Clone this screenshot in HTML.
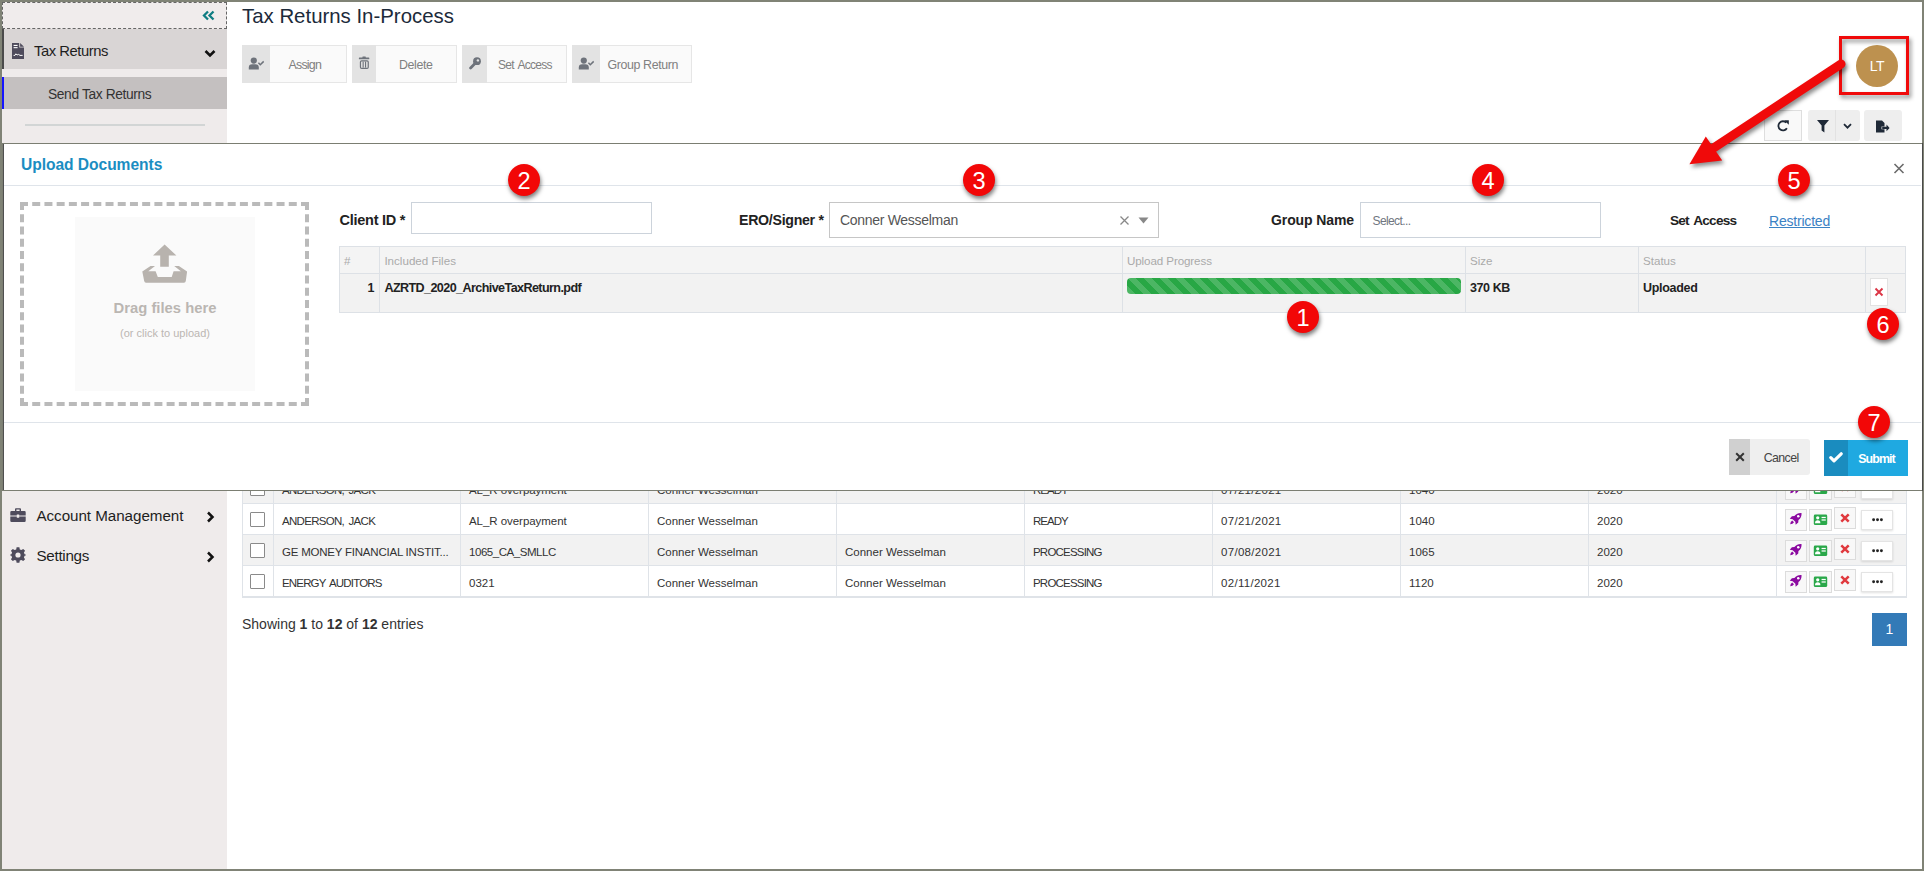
<!DOCTYPE html>
<html><head><meta charset="utf-8">
<style>
*{box-sizing:border-box;margin:0;padding:0}
html,body{width:1924px;height:871px;overflow:hidden;background:#fff;font-family:"Liberation Sans",sans-serif;color:#333}
.a{position:absolute}
.t{position:absolute;white-space:nowrap;line-height:1}
.m{z-index:12}
#frame{position:absolute;left:0;top:0;width:1924px;height:871px;border:2px solid #808376;z-index:60;pointer-events:none}
.badge{position:absolute;width:32px;height:32px;border-radius:50%;background:#f20707;box-shadow:1px 3px 4px rgba(0,0,0,.5);color:#fff;font-size:23.6px;line-height:35px;text-align:center;z-index:40}
.tb{position:absolute;top:45px;height:38px;border:1px solid #e6e6e6;background:#fafafa}
.tb .ic{position:absolute;left:-1px;top:-1px;bottom:-1px;background:#e3e3e3}
.tb .tx{position:absolute;top:12.8px;font-size:12.4px;color:#808080;line-height:1;white-space:nowrap}
svg{display:block}
</style></head><body>
<div id="frame"></div>

<!-- SIDEBAR -->
<div class="a" style="left:2px;top:2px;width:225px;height:867px;background:#efebeb"></div>
<div class="a" style="left:2px;top:2px;width:225px;height:27px;border:1px dashed #666;background:#f0ecec"></div>
<svg class="a" style="left:201px;top:9px" width="16" height="13" viewBox="0 0 16 13"><path d="M7 2.5 L3 6.5 L7 10.5 M12.5 2.5 L8.5 6.5 L12.5 10.5" fill="none" stroke="#0f7d82" stroke-width="2.3"/></svg>
<div class="a" style="left:2px;top:29px;width:225px;height:40px;background:#d9d5d5;border-left:2px solid #4b4b4b"></div>
<div class="a" style="left:2px;top:77px;width:225px;height:32px;background:#c4c0c0;border-left:2px solid #1515ff"></div>
<div class="a" style="left:25px;top:124px;width:180px;height:2px;background:#d2d5d5"></div>
<svg class="a" style="left:12px;top:42.8px" width="12" height="16" viewBox="0 0 12 16"><path d="M0 0 H7.2 V4.4 H12 V16 H0 Z" fill="#4e4b5c"/><path d="M8.1 0.1 L12 3.7 H8.1 Z" fill="#4e4b5c"/><rect x="1.6" y="1.9" width="4" height="1.1" fill="#fff"/><rect x="1.6" y="4.1" width="4" height="1.1" fill="#fff"/><path d="M1.6 12.4 H2.9 L3.9 10.8 L5.1 12 L6.6 11.4 L8 12.4 H10.6" fill="none" stroke="#fff" stroke-width="1"/></svg>
<div class="t" style="left:34px;top:44.3px;font-size:14.8px;letter-spacing:-0.45px;color:#1e1e1e">Tax Returns</div>
<svg class="a" style="left:204px;top:48.7px" width="12" height="10" viewBox="0 0 12 10"><path d="M1.5 2 L6 6.5 L10.5 2" fill="none" stroke="#111" stroke-width="2.6"/></svg>
<div class="t" style="left:48px;top:88.2px;font-size:13.8px;letter-spacing:-0.38px;color:#333">Send Tax Returns</div>

<!-- TITLE -->
<div class="t" style="left:242px;top:5.6px;font-size:20.4px;color:#1c2a3a">Tax Returns In-Process</div>

<!-- TOOLBAR -->
<div class="tb" style="left:242px;width:105px"><div class="ic" style="width:28px"></div>
<svg class="a" style="left:5.2px;top:10.6px" width="16" height="13" viewBox="0 0 16 13"><circle cx="5.8" cy="3.6" r="3.1" fill="#6e737b"/><path d="M0.8 12.4 V10.6 Q0.8 7.3 4.2 7.3 H7.4 Q10.8 7.3 10.8 10.6 V12.4 Z" fill="#6e737b"/><path d="M10.4 5.8 L12.3 7.8 L15.7 4.4" fill="none" stroke="#6e737b" stroke-width="1.5"/></svg>
<div class="tx" style="left:45.5px;letter-spacing:-0.78px">Assign</div></div>
<div class="tb" style="left:352px;width:105px"><div class="ic" style="width:24px"></div>
<svg class="a" style="left:5px;top:10.2px" width="12" height="14" viewBox="0 0 12 14"><rect x="0.9" y="1.6" width="10.4" height="1.7" rx=".4" fill="#6e737b"/><rect x="4.4" y="0.6" width="3.4" height="1.3" rx=".5" fill="#6e737b"/><rect x="2.45" y="4.85" width="7.8" height="7.6" rx="1.2" fill="none" stroke="#6e737b" stroke-width="1.2"/><rect x="4.6" y="5.6" width="1.1" height="6" fill="#6e737b"/><rect x="7" y="5.6" width="1.1" height="6" fill="#6e737b"/></svg>
<div class="tx" style="left:46px;letter-spacing:-0.39px">Delete</div></div>
<div class="tb" style="left:462px;width:105px"><div class="ic" style="width:25px"></div>
<svg class="a" style="left:6px;top:11px" width="13" height="13" viewBox="0 0 13 13"><circle cx="8" cy="4.2" r="3.9" fill="#6e737b"/><circle cx="8.9" cy="3.4" r="1.2" fill="#e3e3e3"/><path d="M6.2 6.3 L1.6 10.9" stroke="#6e737b" stroke-width="2.8" stroke-linecap="round"/></svg>
<div class="tx" style="left:35px;font-size:12px;top:13.2px;letter-spacing:-0.7px;word-spacing:1.5px">Set Access</div></div>
<div class="tb" style="left:572px;width:120px"><div class="ic" style="width:28px"></div>
<svg class="a" style="left:5.2px;top:10.6px" width="16" height="13" viewBox="0 0 16 13"><circle cx="5.8" cy="3.6" r="3.1" fill="#6e737b"/><path d="M0.8 12.4 V10.6 Q0.8 7.3 4.2 7.3 H7.4 Q10.8 7.3 10.8 10.6 V12.4 Z" fill="#6e737b"/><path d="M10.4 5.8 L12.3 7.8 L15.7 4.4" fill="none" stroke="#6e737b" stroke-width="1.5"/></svg>
<div class="tx" style="left:34.5px;letter-spacing:-0.38px">Group Return</div></div>

<!-- RIGHT TOOLS -->
<div class="a" style="left:1764px;top:110px;width:38px;height:31px;background:#f9f9f9;border:1px solid #dedede"></div>
<svg class="a" style="left:1775.5px;top:118.8px" width="14" height="14" viewBox="0 0 14 14"><path d="M10.3 3.6 A4.6 4.6 0 1 0 10.9 9.3" fill="none" stroke="#1f2937" stroke-width="1.8"/><path d="M8.2 1.2 L12.8 1.2 L12.8 5.8 Z" fill="#1f2937"/></svg>
<div class="a" style="left:1808px;top:110px;width:52px;height:31px;background:#eeeeee;border-radius:3px"></div>
<div class="a" style="left:1835px;top:110px;width:1px;height:31px;background:#e2e2e2"></div>
<svg class="a" style="left:1817px;top:120px" width="12" height="13" viewBox="0 0 12 13"><path d="M0 0 H12 L7.4 5.5 V12.5 L4.6 10.5 V5.5 Z" fill="#1f2937"/></svg>
<svg class="a" style="left:1843px;top:123px" width="9" height="7" viewBox="0 0 9 7"><path d="M1 1.2 L4.5 4.7 L8 1.2" fill="none" stroke="#1f2937" stroke-width="1.8"/></svg>
<div class="a" style="left:1864px;top:110px;width:38px;height:31px;background:#eeeeee;border-radius:3px"></div>
<svg class="a" style="left:1876px;top:120px" width="15" height="13" viewBox="0 0 15 13"><path d="M0 0.4 H6 L8.5 2.9 V6.6 H5.5 V9.2 H8.5 V12.6 H0 Z" fill="#1f2937"/><path d="M6.2 6.8 H10.5 V4.6 L13.6 7.9 L10.5 11.2 V9 H6.2 Z" fill="#1f2937"/></svg>

<!-- AVATAR + ANNOTATION -->
<div class="a" style="left:1856px;top:45px;width:42px;height:42px;border-radius:50%;background:#bd914f;color:#fff;font-size:14px;line-height:42px;text-align:center;letter-spacing:-0.5px">LT</div>
<div class="a" style="left:1839px;top:36px;width:70px;height:59px;border:3px solid #f00a0a;z-index:45;filter:drop-shadow(2px 3px 2px rgba(0,0,0,.45))"></div>
<svg class="a" style="left:0;top:0;z-index:46;filter:drop-shadow(2px 3px 2px rgba(0,0,0,.45))" width="1924" height="871" viewBox="0 0 1924 871"><path d="M1841 64 L1712 149" stroke="#f00a0a" stroke-width="9" stroke-linecap="round" fill="none"/><path d="M1689.4 164.2 L1705.8 136.6 L1722.2 160.4 Z" fill="#f00a0a"/></svg>

<!-- MODAL -->
<div id="modal" class="a" style="left:2px;top:143px;width:1920px;height:348px;background:#fff;border:1px solid #7b7e72;border-right:none;box-shadow:inset 1px 0 0 #505050;z-index:10"></div>
<div class="a" style="left:1922px;top:143px;width:1px;height:348px;background:#4a4a4a;z-index:61"></div>
<div class="t m" style="left:21px;top:157px;font-size:15.6px;font-weight:bold;color:#1b8dc2;letter-spacing:-0.05px">Upload Documents</div>
<svg class="a m" style="left:1893px;top:163px" width="12" height="11" viewBox="0 0 12 11"><path d="M1.5 1 L10.5 10 M10.5 1 L1.5 10" stroke="#6b6b6b" stroke-width="1.6"/></svg>
<div class="a m" style="left:4px;top:185px;width:1917px;height:1px;background:#dfe4ea"></div>

<!-- dropzone -->
<div class="a m" style="left:20px;top:202px;width:289px;height:204px;border:4px dashed #bababa"></div>
<div class="a m" style="left:75px;top:217px;width:180px;height:174px;background:#fafafa"></div>
<svg class="a m" style="left:140px;top:240px" width="50" height="46" viewBox="0 0 50 46"><path d="M24.6 4.5 L36.4 15.5 L28.8 15.5 L28.8 26.8 L20.2 26.8 L20.2 15.5 L13 15.5 Z" fill="#b8b3ae"/><path d="M10.5 26 L15 26 L8.3 31.3 L15.6 31.3 L17.8 37 L31.7 37 L33.6 31.3 L40.9 31.3 L34.2 26 L38.9 26 L47.1 31.6 L45.8 41 Q45.5 42.7 44 42.7 L6 42.7 Q4.5 42.7 4.2 41 L2.3 31.6 Z" fill="#b8b3ae"/></svg>
<div class="t m" style="left:75px;width:180px;text-align:center;top:300.5px;font-size:14.8px;font-weight:bold;color:#bab6b2">Drag files here</div>
<div class="t m" style="left:75px;width:180px;text-align:center;top:327.5px;font-size:11px;color:#bab6b2">(or click to upload)</div>

<!-- form row -->
<div class="t m" style="left:339.5px;top:212.8px;font-size:14.5px;font-weight:bold;color:#222;letter-spacing:-0.25px">Client ID *</div>
<div class="a m" style="left:411px;top:202px;width:241px;height:32px;border:1px solid #ccd3db"></div>
<div class="t m" style="left:739px;top:213.2px;font-size:14.2px;font-weight:bold;color:#222;letter-spacing:-0.3px">ERO/Signer *</div>
<div class="a m" style="left:829px;top:202px;width:330px;height:36px;border:1px solid #c6c6c6"></div>
<div class="t m" style="left:840px;top:213.2px;font-size:14px;color:#555;letter-spacing:-0.3px">Conner Wesselman</div>
<svg class="a m" style="left:1119px;top:215px" width="11" height="11" viewBox="0 0 11 11"><path d="M1.5 1.5 L9.5 9.5 M9.5 1.5 L1.5 9.5" stroke="#888" stroke-width="1.3"/></svg>
<svg class="a m" style="left:1138px;top:217px" width="11" height="7" viewBox="0 0 11 7"><path d="M0.5 0.5 H10.5 L5.5 6.5 Z" fill="#888"/></svg>
<div class="t m" style="left:1271px;top:213.2px;font-size:14px;font-weight:bold;color:#222;letter-spacing:-0.1px">Group Name</div>
<div class="a m" style="left:1360px;top:202px;width:241px;height:36px;border:1px solid #ccd3db"></div>
<div class="t m" style="left:1372.5px;top:214.5px;font-size:12px;color:#6f7680;letter-spacing:-0.6px">Select...</div>
<div class="t m" style="left:1670px;top:214px;font-size:13.6px;font-weight:bold;color:#222;letter-spacing:-0.78px;word-spacing:2px">Set Access</div>
<div class="t m" style="left:1769px;top:214.4px;font-size:14px;color:#3b82c4;letter-spacing:-0.2px;text-decoration:underline">Restricted</div>

<!-- files table -->
<div class="a m" style="left:339px;top:246px;width:1567px;height:67px;background:#f2f2f2;border:1px solid #dde1e6"></div>
<div class="a m" style="left:340px;top:247px;width:1565px;height:27px;background:#f4f4f4;border-bottom:1px solid #dde1e6"></div>
<div class="a m" style="left:379px;top:247px;width:1px;height:65px;background:#dde1e6"></div>
<div class="a m" style="left:1122px;top:247px;width:1px;height:65px;background:#dde1e6"></div>
<div class="a m" style="left:1465px;top:247px;width:1px;height:65px;background:#dde1e6"></div>
<div class="a m" style="left:1638px;top:247px;width:1px;height:65px;background:#dde1e6"></div>
<div class="a m" style="left:1865px;top:247px;width:1px;height:65px;background:#dde1e6"></div>
<div class="t m" style="left:344px;top:254.5px;font-size:11.6px;color:#aaa">#</div>
<div class="t m" style="left:384.4px;top:254.5px;font-size:11.6px;color:#aaa">Included Files</div>
<div class="t m" style="left:1127px;top:254.5px;font-size:11.6px;color:#aaa;letter-spacing:-0.1px">Upload Progress</div>
<div class="t m" style="left:1470px;top:254.5px;font-size:11.6px;color:#aaa">Size</div>
<div class="t m" style="left:1643px;top:254.5px;font-size:11.6px;color:#aaa">Status</div>
<div class="t m" style="left:361.5px;width:13px;text-align:right;top:282.3px;font-size:12.5px;font-weight:bold;color:#222">1</div>
<div class="t m" style="left:384.4px;top:282.3px;font-size:12.6px;font-weight:bold;color:#222;letter-spacing:-0.6px">AZRTD_2020_ArchiveTaxReturn.pdf</div>
<div class="a m" style="left:1127px;top:278px;width:334px;height:16px;border-radius:4px;background-color:#28a745;background-image:linear-gradient(45deg,rgba(255,255,255,.17) 25%,transparent 25%,transparent 50%,rgba(255,255,255,.17) 50%,rgba(255,255,255,.17) 75%,transparent 75%,transparent);background-size:16px 16px"></div>
<div class="t m" style="left:1470px;top:282.3px;font-size:12.5px;font-weight:bold;color:#222;letter-spacing:-0.4px">370 KB</div>
<div class="t m" style="left:1643px;top:282.3px;font-size:12.5px;font-weight:bold;color:#222;letter-spacing:-0.3px">Uploaded</div>
<div class="a m" style="left:1870px;top:278px;width:18px;height:28px;background:#fff;border:1px solid #e2e2e2"></div>
<svg class="a m" style="left:1874px;top:287px" width="10" height="10" viewBox="0 0 10 10"><path d="M1.5 1.5 L8.5 8.5 M8.5 1.5 L1.5 8.5" stroke="#dc3545" stroke-width="1.9"/></svg>

<!-- footer -->
<div class="a m" style="left:4px;top:422px;width:1917px;height:1px;background:#dfe4ea"></div>
<div class="a m" style="left:1729px;top:439px;width:81px;height:36px;background:#efefef;border-radius:0 3px 3px 0"></div>
<div class="a m" style="left:1729px;top:439px;width:21px;height:36px;background:#d0d0d0"></div>
<svg class="a m" style="left:1735px;top:452px" width="10" height="10" viewBox="0 0 10 10"><path d="M1.2 1.2 L8.8 8.8 M8.8 1.2 L1.2 8.8" stroke="#333" stroke-width="2"/></svg>
<div class="t m" style="left:1763.8px;top:451.8px;font-size:12.4px;color:#444;letter-spacing:-0.64px">Cancel</div>
<div class="a m" style="left:1824px;top:440px;width:84px;height:36px;background:#1fa9e1"></div>
<div class="a m" style="left:1824px;top:440px;width:24px;height:36px;background:#1a8cbf"></div>
<svg class="a m" style="left:1829px;top:452px" width="14" height="11" viewBox="0 0 14 11"><path d="M1.8 5.6 L5 8.8 L12.2 1.8" fill="none" stroke="#fff" stroke-width="3.2" stroke-linecap="round" stroke-linejoin="round"/></svg>
<div class="t m" style="left:1858.3px;top:452.8px;font-size:12.4px;font-weight:bold;color:#fff;letter-spacing:-0.94px">Submit</div>

<!-- badges -->
<div class="badge" style="left:1287px;top:301px">1</div>
<div class="badge" style="left:508px;top:164px">2</div>
<div class="badge" style="left:963px;top:164px">3</div>
<div class="badge" style="left:1472px;top:164px">4</div>
<div class="badge" style="left:1778px;top:164px">5</div>
<div class="badge" style="left:1867px;top:308px">6</div>
<div class="badge" style="left:1858px;top:406px">7</div>


<!--TABLE_START-->
<div class="a" style="left:242px;top:472px;width:1665px;height:126px;border:1px solid #dfe3e8;border-top:none;border-bottom:2px solid #dfe3e8"></div>
<div class="a" style="left:243px;top:473px;width:1663px;height:31px;background:#f2f2f2;border-bottom:1px solid #dfe3e8"></div>
<div class="a" style="left:250px;top:481px;width:15px;height:15px;border:1px solid #8a8a8a;background:#fff;border-radius:1px"></div>
<div class="t" style="left:282px;top:484.9px;font-size:11.5px;letter-spacing:-0.7px;word-spacing:2px;color:#333">ANDERSON, JACK</div>
<div class="t" style="left:469px;top:484.9px;font-size:11.5px;letter-spacing:-0.05px;color:#333">AL_R overpayment</div>
<div class="t" style="left:657px;top:484.9px;font-size:11.5px;letter-spacing:0px;color:#333">Conner Wesselman</div>
<div class="t" style="left:1033px;top:484.9px;font-size:11.5px;letter-spacing:-1.0px;color:#333">READY</div>
<div class="t" style="left:1221px;top:484.9px;font-size:11.5px;letter-spacing:0.3px;color:#333">07/21/2021</div>
<div class="t" style="left:1409px;top:484.9px;font-size:11.5px;letter-spacing:0px;color:#333">1040</div>
<div class="t" style="left:1597px;top:484.9px;font-size:11.5px;letter-spacing:0px;color:#333">2020</div>
<div class="a" style="left:1785px;top:478px;width:22px;height:22px;background:#f8f8f8;border:1px solid #dcdcdc"></div>
<svg class="a" style="left:1789px;top:481.3px" width="13.5" height="13.5" viewBox="0 0 14 14"><path d="M13 1 Q8.5 0.6 5.6 4.2 L3 4.4 L0.8 7.1 L3.8 7.4 L6.6 10.2 L6.9 13.2 L9.6 10.9 L9.8 8.4 Q13.4 5.5 13 1 Z" fill="#8b0aa0"/><circle cx="9.6" cy="4.4" r="1.3" fill="#fff"/><path d="M3.3 8.8 Q1.4 10 1.2 12.8 Q4 12.6 5.2 10.7 Z" fill="#8b0aa0"/></svg>
<div class="a" style="left:1809px;top:478px;width:23px;height:22px;background:#f8f8f8;border:1px solid #dcdcdc"></div>
<svg class="a" style="left:1813px;top:482.6px" width="15" height="11.5" viewBox="0 0 15 12"><rect x="0.5" y="0.5" width="14" height="11" rx="1.5" fill="#2aa84a"/><circle cx="4.6" cy="4" r="1.7" fill="#fff"/><path d="M1.8 9.6 Q1.8 6.6 4.6 6.6 Q7.4 6.6 7.4 9.6 Z" fill="#fff"/><rect x="8.6" y="3" width="4.4" height="1.3" fill="#fff"/><rect x="8.6" y="5.6" width="4.4" height="1.3" fill="#fff"/></svg>
<div class="a" style="left:1834px;top:476px;width:22px;height:22px;background:#f8f8f8;border:1px solid #dcdcdc"></div>
<svg class="a" style="left:1840px;top:482px" width="10" height="10" viewBox="0 0 10 10"><path d="M1.3 1.3 L8.7 8.7 M8.7 1.3 L1.3 8.7" stroke="#e0393e" stroke-width="2.5"/></svg>
<div class="a" style="left:1861px;top:479px;width:32px;height:20px;background:#fff;border:1px solid #e4e4e4;box-shadow:0 1px 2px rgba(0,0,0,.12)"></div>
<svg class="a" style="left:1871.8px;top:487.4px" width="11" height="3.5" viewBox="0 0 11 3.5"><circle cx="1.6" cy="1.75" r="1.45" fill="#222"/><circle cx="5.5" cy="1.75" r="1.45" fill="#222"/><circle cx="9.4" cy="1.75" r="1.45" fill="#222"/></svg>
<div class="a" style="left:243px;top:504px;width:1663px;height:31px;background:#ffffff;border-bottom:1px solid #dfe3e8"></div>
<div class="a" style="left:250px;top:512px;width:15px;height:15px;border:1px solid #8a8a8a;background:#fff;border-radius:1px"></div>
<div class="t" style="left:282px;top:515.9px;font-size:11.5px;letter-spacing:-0.7px;word-spacing:2px;color:#333">ANDERSON, JACK</div>
<div class="t" style="left:469px;top:515.9px;font-size:11.5px;letter-spacing:-0.05px;color:#333">AL_R overpayment</div>
<div class="t" style="left:657px;top:515.9px;font-size:11.5px;letter-spacing:0px;color:#333">Conner Wesselman</div>
<div class="t" style="left:1033px;top:515.9px;font-size:11.5px;letter-spacing:-1.0px;color:#333">READY</div>
<div class="t" style="left:1221px;top:515.9px;font-size:11.5px;letter-spacing:0.3px;color:#333">07/21/2021</div>
<div class="t" style="left:1409px;top:515.9px;font-size:11.5px;letter-spacing:0px;color:#333">1040</div>
<div class="t" style="left:1597px;top:515.9px;font-size:11.5px;letter-spacing:0px;color:#333">2020</div>
<div class="a" style="left:1785px;top:509px;width:22px;height:22px;background:#f8f8f8;border:1px solid #dcdcdc"></div>
<svg class="a" style="left:1789px;top:512.3px" width="13.5" height="13.5" viewBox="0 0 14 14"><path d="M13 1 Q8.5 0.6 5.6 4.2 L3 4.4 L0.8 7.1 L3.8 7.4 L6.6 10.2 L6.9 13.2 L9.6 10.9 L9.8 8.4 Q13.4 5.5 13 1 Z" fill="#8b0aa0"/><circle cx="9.6" cy="4.4" r="1.3" fill="#fff"/><path d="M3.3 8.8 Q1.4 10 1.2 12.8 Q4 12.6 5.2 10.7 Z" fill="#8b0aa0"/></svg>
<div class="a" style="left:1809px;top:509px;width:23px;height:22px;background:#f8f8f8;border:1px solid #dcdcdc"></div>
<svg class="a" style="left:1813px;top:513.6px" width="15" height="11.5" viewBox="0 0 15 12"><rect x="0.5" y="0.5" width="14" height="11" rx="1.5" fill="#2aa84a"/><circle cx="4.6" cy="4" r="1.7" fill="#fff"/><path d="M1.8 9.6 Q1.8 6.6 4.6 6.6 Q7.4 6.6 7.4 9.6 Z" fill="#fff"/><rect x="8.6" y="3" width="4.4" height="1.3" fill="#fff"/><rect x="8.6" y="5.6" width="4.4" height="1.3" fill="#fff"/></svg>
<div class="a" style="left:1834px;top:507px;width:22px;height:22px;background:#f8f8f8;border:1px solid #dcdcdc"></div>
<svg class="a" style="left:1840px;top:513px" width="10" height="10" viewBox="0 0 10 10"><path d="M1.3 1.3 L8.7 8.7 M8.7 1.3 L1.3 8.7" stroke="#e0393e" stroke-width="2.5"/></svg>
<div class="a" style="left:1861px;top:510px;width:32px;height:20px;background:#fff;border:1px solid #e4e4e4;box-shadow:0 1px 2px rgba(0,0,0,.12)"></div>
<svg class="a" style="left:1871.8px;top:518.4px" width="11" height="3.5" viewBox="0 0 11 3.5"><circle cx="1.6" cy="1.75" r="1.45" fill="#222"/><circle cx="5.5" cy="1.75" r="1.45" fill="#222"/><circle cx="9.4" cy="1.75" r="1.45" fill="#222"/></svg>
<div class="a" style="left:243px;top:535px;width:1663px;height:31px;background:#f2f2f2;border-bottom:1px solid #dfe3e8"></div>
<div class="a" style="left:250px;top:543px;width:15px;height:15px;border:1px solid #8a8a8a;background:#fff;border-radius:1px"></div>
<div class="t" style="left:282px;top:546.9px;font-size:11.5px;letter-spacing:-0.22px;color:#333">GE MONEY FINANCIAL INSTIT...</div>
<div class="t" style="left:469px;top:546.9px;font-size:11.5px;letter-spacing:-0.45px;color:#333">1065_CA_SMLLC</div>
<div class="t" style="left:657px;top:546.9px;font-size:11.5px;letter-spacing:0px;color:#333">Conner Wesselman</div>
<div class="t" style="left:845px;top:546.9px;font-size:11.5px;letter-spacing:0px;color:#333">Conner Wesselman</div>
<div class="t" style="left:1033px;top:546.9px;font-size:11.5px;letter-spacing:-0.8px;color:#333">PROCESSING</div>
<div class="t" style="left:1221px;top:546.9px;font-size:11.5px;letter-spacing:0.3px;color:#333">07/08/2021</div>
<div class="t" style="left:1409px;top:546.9px;font-size:11.5px;letter-spacing:0px;color:#333">1065</div>
<div class="t" style="left:1597px;top:546.9px;font-size:11.5px;letter-spacing:0px;color:#333">2020</div>
<div class="a" style="left:1785px;top:540px;width:22px;height:22px;background:#f8f8f8;border:1px solid #dcdcdc"></div>
<svg class="a" style="left:1789px;top:543.3px" width="13.5" height="13.5" viewBox="0 0 14 14"><path d="M13 1 Q8.5 0.6 5.6 4.2 L3 4.4 L0.8 7.1 L3.8 7.4 L6.6 10.2 L6.9 13.2 L9.6 10.9 L9.8 8.4 Q13.4 5.5 13 1 Z" fill="#8b0aa0"/><circle cx="9.6" cy="4.4" r="1.3" fill="#fff"/><path d="M3.3 8.8 Q1.4 10 1.2 12.8 Q4 12.6 5.2 10.7 Z" fill="#8b0aa0"/></svg>
<div class="a" style="left:1809px;top:540px;width:23px;height:22px;background:#f8f8f8;border:1px solid #dcdcdc"></div>
<svg class="a" style="left:1813px;top:544.6px" width="15" height="11.5" viewBox="0 0 15 12"><rect x="0.5" y="0.5" width="14" height="11" rx="1.5" fill="#2aa84a"/><circle cx="4.6" cy="4" r="1.7" fill="#fff"/><path d="M1.8 9.6 Q1.8 6.6 4.6 6.6 Q7.4 6.6 7.4 9.6 Z" fill="#fff"/><rect x="8.6" y="3" width="4.4" height="1.3" fill="#fff"/><rect x="8.6" y="5.6" width="4.4" height="1.3" fill="#fff"/></svg>
<div class="a" style="left:1834px;top:538px;width:22px;height:22px;background:#f8f8f8;border:1px solid #dcdcdc"></div>
<svg class="a" style="left:1840px;top:544px" width="10" height="10" viewBox="0 0 10 10"><path d="M1.3 1.3 L8.7 8.7 M8.7 1.3 L1.3 8.7" stroke="#e0393e" stroke-width="2.5"/></svg>
<div class="a" style="left:1861px;top:541px;width:32px;height:20px;background:#fff;border:1px solid #e4e4e4;box-shadow:0 1px 2px rgba(0,0,0,.12)"></div>
<svg class="a" style="left:1871.8px;top:549.4px" width="11" height="3.5" viewBox="0 0 11 3.5"><circle cx="1.6" cy="1.75" r="1.45" fill="#222"/><circle cx="5.5" cy="1.75" r="1.45" fill="#222"/><circle cx="9.4" cy="1.75" r="1.45" fill="#222"/></svg>
<div class="a" style="left:243px;top:566px;width:1663px;height:31px;background:#ffffff;border-bottom:1px solid #dfe3e8"></div>
<div class="a" style="left:250px;top:574px;width:15px;height:15px;border:1px solid #8a8a8a;background:#fff;border-radius:1px"></div>
<div class="t" style="left:282px;top:577.9px;font-size:11.5px;letter-spacing:-0.84px;word-spacing:2px;color:#333">ENERGY AUDITORS</div>
<div class="t" style="left:469px;top:577.9px;font-size:11.5px;letter-spacing:0px;color:#333">0321</div>
<div class="t" style="left:657px;top:577.9px;font-size:11.5px;letter-spacing:0px;color:#333">Conner Wesselman</div>
<div class="t" style="left:845px;top:577.9px;font-size:11.5px;letter-spacing:0px;color:#333">Conner Wesselman</div>
<div class="t" style="left:1033px;top:577.9px;font-size:11.5px;letter-spacing:-0.8px;color:#333">PROCESSING</div>
<div class="t" style="left:1221px;top:577.9px;font-size:11.5px;letter-spacing:0.3px;color:#333">02/11/2021</div>
<div class="t" style="left:1409px;top:577.9px;font-size:11.5px;letter-spacing:0px;color:#333">1120</div>
<div class="t" style="left:1597px;top:577.9px;font-size:11.5px;letter-spacing:0px;color:#333">2020</div>
<div class="a" style="left:1785px;top:571px;width:22px;height:22px;background:#f8f8f8;border:1px solid #dcdcdc"></div>
<svg class="a" style="left:1789px;top:574.3px" width="13.5" height="13.5" viewBox="0 0 14 14"><path d="M13 1 Q8.5 0.6 5.6 4.2 L3 4.4 L0.8 7.1 L3.8 7.4 L6.6 10.2 L6.9 13.2 L9.6 10.9 L9.8 8.4 Q13.4 5.5 13 1 Z" fill="#8b0aa0"/><circle cx="9.6" cy="4.4" r="1.3" fill="#fff"/><path d="M3.3 8.8 Q1.4 10 1.2 12.8 Q4 12.6 5.2 10.7 Z" fill="#8b0aa0"/></svg>
<div class="a" style="left:1809px;top:571px;width:23px;height:22px;background:#f8f8f8;border:1px solid #dcdcdc"></div>
<svg class="a" style="left:1813px;top:575.6px" width="15" height="11.5" viewBox="0 0 15 12"><rect x="0.5" y="0.5" width="14" height="11" rx="1.5" fill="#2aa84a"/><circle cx="4.6" cy="4" r="1.7" fill="#fff"/><path d="M1.8 9.6 Q1.8 6.6 4.6 6.6 Q7.4 6.6 7.4 9.6 Z" fill="#fff"/><rect x="8.6" y="3" width="4.4" height="1.3" fill="#fff"/><rect x="8.6" y="5.6" width="4.4" height="1.3" fill="#fff"/></svg>
<div class="a" style="left:1834px;top:569px;width:22px;height:22px;background:#f8f8f8;border:1px solid #dcdcdc"></div>
<svg class="a" style="left:1840px;top:575px" width="10" height="10" viewBox="0 0 10 10"><path d="M1.3 1.3 L8.7 8.7 M8.7 1.3 L1.3 8.7" stroke="#e0393e" stroke-width="2.5"/></svg>
<div class="a" style="left:1861px;top:572px;width:32px;height:20px;background:#fff;border:1px solid #e4e4e4;box-shadow:0 1px 2px rgba(0,0,0,.12)"></div>
<svg class="a" style="left:1871.8px;top:580.4px" width="11" height="3.5" viewBox="0 0 11 3.5"><circle cx="1.6" cy="1.75" r="1.45" fill="#222"/><circle cx="5.5" cy="1.75" r="1.45" fill="#222"/><circle cx="9.4" cy="1.75" r="1.45" fill="#222"/></svg>
<div class="a" style="left:273px;top:472px;width:1px;height:124px;background:#dfe3e8"></div>
<div class="a" style="left:460px;top:472px;width:1px;height:124px;background:#dfe3e8"></div>
<div class="a" style="left:648px;top:472px;width:1px;height:124px;background:#dfe3e8"></div>
<div class="a" style="left:836px;top:472px;width:1px;height:124px;background:#dfe3e8"></div>
<div class="a" style="left:1024px;top:472px;width:1px;height:124px;background:#dfe3e8"></div>
<div class="a" style="left:1212px;top:472px;width:1px;height:124px;background:#dfe3e8"></div>
<div class="a" style="left:1400px;top:472px;width:1px;height:124px;background:#dfe3e8"></div>
<div class="a" style="left:1588px;top:472px;width:1px;height:124px;background:#dfe3e8"></div>
<div class="a" style="left:1776px;top:472px;width:1px;height:124px;background:#dfe3e8"></div>
<svg class="a" style="left:10px;top:508px" width="16" height="14" viewBox="0 0 16 14"><path d="M5 3 V1.2 Q5 0.3 5.9 0.3 H10.1 Q11 0.3 11 1.2 V3 H9.6 V1.6 H6.4 V3 Z" fill="#4e4b5c"/><path d="M0.3 4.2 Q0.3 3 1.5 3 H14.5 Q15.7 3 15.7 4.2 V7.6 H9.2 V6.6 H6.8 V7.6 H0.3 Z" fill="#4e4b5c"/><path d="M0.3 8.6 H6.8 V9.8 H9.2 V8.6 H15.7 V12.8 Q15.7 14 14.5 14 H1.5 Q0.3 14 0.3 12.8 Z" fill="#4e4b5c"/></svg>
<svg class="a" style="left:10px;top:547px" width="16" height="16" viewBox="0 0 16 16"><path d="M6.6 0.3 H9.4 L9.8 2.4 L11.4 3.1 L13.2 1.9 L15.1 3.8 L13.9 5.6 L14.6 7.2 L15.7 7.4 V8.6 L14.6 8.8 L13.9 10.4 L15.1 12.2 L13.2 14.1 L11.4 12.9 L9.8 13.6 L9.4 15.7 H6.6 L6.2 13.6 L4.6 12.9 L2.8 14.1 L0.9 12.2 L2.1 10.4 L1.4 8.8 L0.3 8.6 V7.4 L1.4 7.2 L2.1 5.6 L0.9 3.8 L2.8 1.9 L4.6 3.1 L6.2 2.4 Z" fill="#4e4b5c"/><circle cx="8" cy="8" r="2.6" fill="#efebeb"/></svg>
<svg class="a" style="left:205px;top:511px" width="11" height="12" viewBox="0 0 11 12"><path d="M3 1.5 L7.5 6 L3 10.5" fill="none" stroke="#111" stroke-width="2.5"/></svg>
<svg class="a" style="left:205px;top:551px" width="11" height="12" viewBox="0 0 11 12"><path d="M3 1.5 L7.5 6 L3 10.5" fill="none" stroke="#111" stroke-width="2.5"/></svg>
<!--TABLE_END-->

<!-- SIDEBAR LOWER -->
<div class="t" style="left:36.5px;top:508.3px;font-size:15.2px;letter-spacing:-0.05px;color:#1e1e1e">Account Management</div>
<div class="t" style="left:36.5px;top:547.8px;font-size:15.2px;letter-spacing:-0.3px;color:#1e1e1e">Settings</div>
<div class="t" style="left:242px;top:617.2px;font-size:14px;color:#333">Showing <b>1</b> to <b>12</b> of <b>12</b> entries</div>
<div class="a" style="left:1872px;top:613px;width:35px;height:33px;background:#337ab7;color:#fff;font-size:14px;line-height:33px;text-align:center">1</div>

</body></html>
